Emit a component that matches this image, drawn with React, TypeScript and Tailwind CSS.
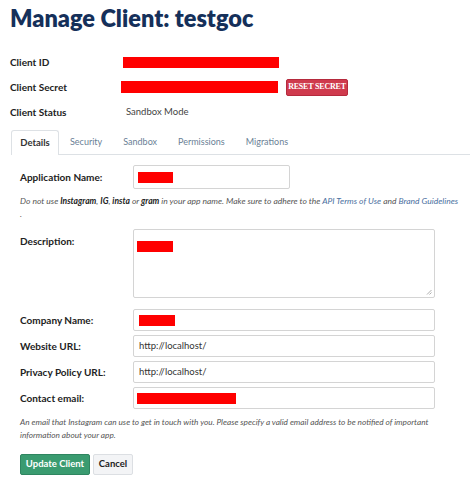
const Redact = ({ w, h = 11 }: { w: number; h?: number }) => (
  <span className="inline-block bg-[#ff0000] align-middle" style={{ width: w, height: h }} />
);

function Row({ label, children, tall }: { label: string; children: React.ReactNode; tall?: boolean }) {
  return (
    <div className={`flex ${tall ? "items-start" : "items-center"}`}>
      <div className={`w-[113px] shrink-0 font-bold text-[10px] text-[#222] ${tall ? "pt-[5px]" : ""}`}>{label}</div>
      {children}
    </div>
  );
}

const inputBox = "w-[302px] h-[22px] border border-[#d4d4d4] rounded-[2px] flex items-center";

export default function App() {
  return (
    <div className="w-[474px] h-[486px] bg-white overflow-hidden font-['Lato','Open_Sans',sans-serif] text-[#333]">
      <h1 className="pl-[10px] pt-[3px] text-[23.5px] leading-[30px] font-extrabold text-[#15305a]">
        Manage Client: testgoc
      </h1>

      <div className="pl-[10px] mt-[22px] flex flex-col gap-[11px] text-[10px]">
        <div className="flex items-center h-[14px]">
          <div className="w-[113px] font-bold text-[#222]">Client ID</div>
          <Redact w={156} />
        </div>
        <div className="flex items-center h-[14px]">
          <div className="w-[111px] font-bold text-[#222]">Client Secret</div>
          <Redact w={157} h={12} />
          <button className="ml-[8px] h-[17px] w-[62px] rounded-[2px] bg-[#cf3a4d] border border-[#b52a3d] text-white font-['Liberation_Serif',serif] font-bold text-[8px] tracking-[-0.2px]">
            RESET SECRET
          </button>
        </div>
        <div className="flex items-center h-[14px]">
          <div className="w-[116px] font-bold text-[#222]">Client Status</div>
          <div className="text-[#444] text-[9.5px]">Sandbox Mode</div>
        </div>
      </div>

      <div className="ml-[11px] mr-[4px] mt-[11px] flex border-b border-[#dde1e5] text-[9px] h-[25px]">
        <div className="w-[48px] flex items-center justify-center border border-b-0 border-[#dde1e5] rounded-t-[3px] bg-white font-bold text-[#333] text-[9.5px] -mb-px">
          Details
        </div>
        <div className="flex items-center text-[#6b7f96] gap-[21px] pl-[11px]">
          <span>Security</span>
          <span>Sandbox</span>
          <span>Permissions</span>
          <span>Migrations</span>
        </div>
      </div>

      <div className="pl-[20px] pr-[39px] pt-[10px] flex flex-col">
        <Row label="Application Name:">
          <div className="w-[157px] h-[24px] border border-[#d4d4d4] rounded-[2px] flex items-center pl-[4px]">
            <Redact w={35} />
          </div>
        </Row>
        <p className="mt-[6px] text-[8.5px] italic text-[#555] leading-[13px] -mr-[30px]">
          Do not use <b className="text-[#222]">Instagram</b>, <b className="text-[#222]">IG</b>, <b className="text-[#222]">insta</b> or{" "}
          <b className="text-[#222]">gram</b> in your app name. Make sure to adhere to the{" "}
          <span className="text-[#4a6fa0]">API Terms of Use</span> and <span className="text-[#4a6fa0]">Brand Guidelines</span>
          <br />.
        </p>

        <div className="mt-[8px]">
          <Row label="Description:" tall>
            <div className="w-[302px] h-[69px] border border-[#d4d4d4] rounded-[2px] pl-[3px] pt-[3px] relative">
              <Redact w={36} />
              <svg className="absolute right-[2px] bottom-[2px]" width="6" height="6" viewBox="0 0 6 6">
                <path d="M5.5 1 L1 5.5 M5.5 3.5 L3.5 5.5" stroke="#999" strokeWidth="0.8" />
              </svg>
            </div>
          </Row>
        </div>

        <div className="mt-[11px] flex flex-col gap-[4px]">
          <Row label="Company Name:">
            <div className={`${inputBox} pl-[5px]`}>
              <Redact w={36} />
            </div>
          </Row>
          <Row label="Website URL:">
            <div className={`${inputBox} pl-[5px] text-[9.5px] text-[#333]`}>http://localhost/</div>
          </Row>
          <Row label="Privacy Policy URL:">
            <div className={`${inputBox} pl-[5px] text-[9.5px] text-[#333]`}>http://localhost/</div>
          </Row>
          <Row label="Contact email:">
            <div className={`${inputBox} pl-[3px]`}>
              <Redact w={99} />
            </div>
          </Row>
        </div>

        <p className="mt-[7px] text-[8.25px] italic text-[#555] leading-[13px]">
          An email that Instagram can use to get in touch with you. Please specify a valid email address to be notified of important information about your app.
        </p>

        <div className="mt-[12px] flex gap-[3px]">
          <button className="h-[21px] w-[70px] rounded-[2px] bg-[#3a9b70] border border-[#2f8560] text-white font-bold text-[9.5px]">
            Update Client
          </button>
          <button className="h-[21px] w-[40px] rounded-[2px] bg-[#f3f4f6] border border-[#dcdfe3] text-[#222] font-bold text-[9.5px]">
            Cancel
          </button>
        </div>
      </div>
    </div>
  );
}
